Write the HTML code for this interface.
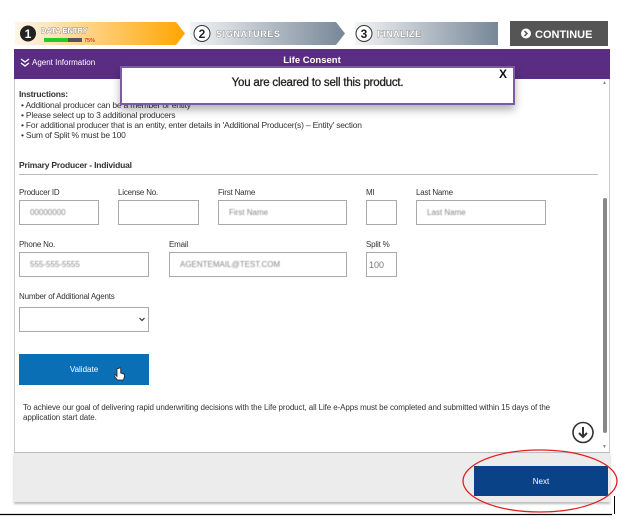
<!DOCTYPE html>
<html><head><meta charset="utf-8"><style>
*{margin:0;padding:0;box-sizing:border-box}
body{width:624px;height:518px;background:#fff;position:relative;overflow:hidden;font-family:"Liberation Sans",Arial,sans-serif;color:#333}
.a{position:absolute}
.lbl{position:absolute;font-size:8px;color:#333;letter-spacing:-0.2px}
.in{position:absolute;border:1px solid #a9a9a9;background:#fff;font-size:8px;color:#aaa;padding-left:10px;display:flex;align-items:center}
.in.b span{filter:blur(0.6px);color:#888}
.t{font-size:8.5px;color:#333;letter-spacing:-0.2px;position:absolute}
</style></head><body>
<svg class="a" style="left:0;top:0" width="624" height="60">
<defs>
<linearGradient id="g1" x1="0" x2="1"><stop offset="0" stop-color="#fff6ea"/><stop offset="1" stop-color="#ffa500"/></linearGradient>
<linearGradient id="g2" x1="0" x2="1"><stop offset="0" stop-color="#f2f4f6"/><stop offset="1" stop-color="#778797"/></linearGradient>
</defs>
<polygon points="15,22 176,22 185,33.5 176,45 15,45" fill="url(#g1)"/>
<polygon points="190,22 336,22 345,33.5 336,45 190,45" fill="url(#g2)"/>
<polygon points="355,22 498,22 498,45 355,45" fill="url(#g2)"/>
<circle cx="28" cy="33.5" r="8" fill="#222"/>
<text x="28" y="38" font-size="12" font-weight="bold" fill="#fff" text-anchor="middle" font-family="Liberation Sans">1</text>
<circle cx="202" cy="33.5" r="8" fill="#fff" stroke="#333" stroke-width="1"/>
<text x="202" y="38" font-size="12" font-weight="bold" fill="#222" text-anchor="middle" font-family="Liberation Sans">2</text>
<circle cx="364" cy="33.5" r="8" fill="#fff" stroke="#333" stroke-width="1"/>
<text x="364" y="38" font-size="12" font-weight="bold" fill="#222" text-anchor="middle" font-family="Liberation Sans">3</text>
<g font-family="Liberation Sans" font-weight="bold" fill="#fff" stroke="#777" stroke-width="0.7" paint-order="stroke">
<text x="41" y="33" font-size="7.5">DATA ENTRY</text>
<text x="216" y="37" font-size="9" textLength="64">SIGNATURES</text>
<text x="377" y="37" font-size="9" textLength="44">FINALIZE</text>
</g>
<rect x="44" y="38" width="24" height="4" fill="#2c2"/><rect x="68" y="38" width="14" height="4" fill="#555"/>
<text x="84" y="42" font-size="5.5" fill="#c00" font-family="Liberation Sans">75%</text>
<rect x="510" y="21" width="98" height="25" fill="#555"/>
<circle cx="526" cy="33.5" r="5" fill="#fff"/>
<path d="M524.5 31l2.5 2.5-2.5 2.5" stroke="#555" stroke-width="1.5" fill="none"/>
<text x="535" y="38" font-size="11" font-weight="bold" fill="#fff" font-family="Liberation Sans">CONTINUE</text>
</svg>
<div class="a" style="left:14px;top:49px;width:596px;height:30px;background:#5a2d82"></div>
<svg class="a" style="left:20px;top:57px" width="10" height="10"><path d="M1 2l4 3 4-3M1 6l4 3 4-3" stroke="#fff" stroke-width="1.3" fill="none"/></svg>
<div class="a" style="left:32px;top:58px;color:#fff;font-size:8px">Agent Information</div>
<div class="a" style="left:0;width:624px;top:55px;text-align:center;color:#fff;font-size:9.5px;font-weight:bold">Life Consent</div>
<div class="a" style="left:14px;top:79px;width:596px;height:373px;border-left:1px solid #ccc;border-right:1px solid #ccc;background:#fff"></div>
<div class="a" style="left:603px;top:198px;width:4px;height:235px;background:#888;border-radius:2px"></div>
<div class="a" style="left:602px;top:80px;font-size:5px;color:#888">▲</div>
<div class="a" style="left:602px;top:444px;font-size:5px;color:#888">▼</div>
<div class="t" style="left:19px;top:89px;font-weight:bold">Instructions:</div>
<div class="t" style="left:21px;top:100px;line-height:10px">• Additional producer can be a member or entity<br>• Please select up to 3 additional producers<br>• For additional producer that is an entity, enter details in 'Additional Producer(s) – Entity' section<br>• Sum of Split % must be 100</div>
<div class="t" style="left:19px;top:160px;font-weight:bold">Primary Producer - Individual</div>
<div class="a" style="left:19px;top:174px;width:579px;height:1px;background:#bbb"></div>
<div class="lbl" style="left:19px;top:188px">Producer ID</div>
<div class="lbl" style="left:118px;top:188px">License No.</div>
<div class="lbl" style="left:218px;top:188px">First Name</div>
<div class="lbl" style="left:366px;top:188px">MI</div>
<div class="lbl" style="left:416px;top:188px">Last Name</div>
<div class="in b" style="left:19px;top:200px;width:80px;height:25px"><span>00000000</span></div>
<div class="in" style="left:118px;top:200px;width:81px;height:25px"></div>
<div class="in b" style="left:218px;top:200px;width:129px;height:25px"><span>First Name</span></div>
<div class="in" style="left:366px;top:200px;width:31px;height:25px"></div>
<div class="in b" style="left:416px;top:200px;width:130px;height:25px"><span>Last Name</span></div>
<div class="lbl" style="left:19px;top:240px">Phone No.</div>
<div class="lbl" style="left:169px;top:240px">Email</div>
<div class="lbl" style="left:366px;top:240px">Split %</div>
<div class="in b" style="left:19px;top:252px;width:130px;height:25px"><span>555-555-5555</span></div>
<div class="in b" style="left:169px;top:252px;width:178px;height:25px"><span>AGENTEMAIL@TEST.COM</span></div>
<div class="in" style="left:366px;top:252px;width:31px;height:25px;padding-left:2px;color:#777;font-size:9px">100</div>
<div class="lbl" style="left:19px;top:292px">Number of Additional Agents</div>
<div class="in" style="left:19px;top:307px;width:130px;height:25px"></div>
<svg class="a" style="left:139px;top:317px" width="6" height="5"><path d="M0.5 1l2.5 2.5 2.5-2.5" stroke="#333" stroke-width="1.2" fill="none"/></svg>
<div class="a" style="left:19px;top:354px;width:130px;height:31px;background:#0b6fb5;color:#fff;font-size:8px;display:flex;align-items:center;justify-content:center">Validate</div>
<svg class="a" style="left:114px;top:367px" width="12" height="16"><path d="M3 1.5v8l-1.5-1.5c-1-.7-1.8.3-1 1.2L3.5 13h6l1-4V7.5c0-.8-1.2-.8-1.2 0v-.5c0-.8-1.3-.8-1.3 0v-.5c0-.8-1.3-.8-1.3 0V1.5c0-1-1.7-1-1.7 0z" fill="#fff" stroke="#222" stroke-width="0.8"/></svg>
<div class="t" style="left:23px;top:403px;font-size:8px;line-height:10px;width:590px;letter-spacing:-0.1px">To achieve our goal of delivering rapid underwriting decisions with the Life product, all Life e-Apps must be completed and submitted within 15 days of the<br>application start date.</div>
<svg class="a" style="left:571px;top:421px" width="24" height="24"><circle cx="12" cy="11.5" r="10" fill="#fff" stroke="#333" stroke-width="1.6"/><path d="M12 6v10M8 12l4 4 4-4" stroke="#333" stroke-width="2" fill="none"/></svg>
<div class="a" style="left:14px;top:452px;width:596px;height:50px;background:#ececec;border-top:1px solid #bbb;box-shadow:0 2px 2px #bbb"></div>
<div class="a" style="left:474px;top:466px;width:134px;height:30px;background:#0a4287;color:#fff;font-size:8px;display:flex;align-items:center;justify-content:center">Next</div>
<svg class="a" style="left:0;top:0" width="624" height="518"><ellipse cx="540" cy="481" rx="77" ry="31" fill="none" stroke="#e02020" stroke-width="1.3"/><line x1="0" y1="514.5" x2="612" y2="514.5" stroke="#000" stroke-width="1.2"/><line x1="614.5" y1="496" x2="614.5" y2="514" stroke="#000" stroke-width="1"/></svg>
<div class="a" style="left:120px;top:66px;width:395px;height:39px;background:#fff;border:2px solid #7d5aa8;box-shadow:0 5px 8px rgba(0,0,0,.3)"></div>
<div class="a" style="left:120px;width:395px;top:77px;text-align:center;font-size:11.5px;color:#222;letter-spacing:-0.2px;-webkit-text-stroke:0.3px #222">You are cleared to sell this product.</div>
<div class="a" style="left:499px;top:67px;font-size:12px;font-weight:bold;color:#111">X</div>
</body></html>
